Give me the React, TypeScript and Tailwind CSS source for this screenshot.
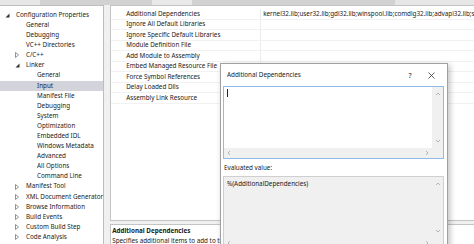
import React from 'react'

type Node = { label: string; level: 0 | 1 | 2; tri?: 'open' | 'closed'; selected?: boolean }

const tree: Node[] = [
  { label: 'Configuration Properties', level: 0, tri: 'open' },
  { label: 'General', level: 1 },
  { label: 'Debugging', level: 1 },
  { label: 'VC++ Directories', level: 1 },
  { label: 'C/C++', level: 1, tri: 'closed' },
  { label: 'Linker', level: 1, tri: 'open' },
  { label: 'General', level: 2 },
  { label: 'Input', level: 2, selected: true },
  { label: 'Manifest File', level: 2 },
  { label: 'Debugging', level: 2 },
  { label: 'System', level: 2 },
  { label: 'Optimization', level: 2 },
  { label: 'Embedded IDL', level: 2 },
  { label: 'Windows Metadata', level: 2 },
  { label: 'Advanced', level: 2 },
  { label: 'All Options', level: 2 },
  { label: 'Command Line', level: 2 },
  { label: 'Manifest Tool', level: 1, tri: 'closed' },
  { label: 'XML Document Generator', level: 1, tri: 'closed' },
  { label: 'Browse Information', level: 1, tri: 'closed' },
  { label: 'Build Events', level: 1, tri: 'closed' },
  { label: 'Custom Build Step', level: 1, tri: 'closed' },
  { label: 'Code Analysis', level: 1, tri: 'closed' },
]

const indent = ['pl-[4px]', 'pl-[14px]', 'pl-[25px]']

const props = [
  ['Additional Dependencies', 'kernel32.lib;user32.lib;gdi32.lib;winspool.lib;comdlg32.lib;advapi32.lib;shell32.lib'],
  ['Ignore All Default Libraries', ''],
  ['Ignore Specific Default Libraries', ''],
  ['Module Definition File', ''],
  ['Add Module to Assembly', ''],
  ['Embed Managed Resource File', ''],
  ['Force Symbol References', ''],
  ['Delay Loaded Dlls', ''],
  ['Assembly Link Resource', ''],
]

function Tri({ open }: { open: boolean }) {
  return open ? (
    <svg width="5" height="5" viewBox="0 0 5 5">
      <path d="M4.5 0.5 L4.5 4.5 L0.5 4.5 Z" fill="#333" />
    </svg>
  ) : (
    <svg width="4" height="6" viewBox="0 0 4 6">
      <path d="M0.5 0.5 L3.5 3 L0.5 5.5 Z" fill="none" stroke="#777" strokeWidth="0.8" />
    </svg>
  )
}

function Chevron({ dir }: { dir: 'up' | 'down' | 'left' | 'right' }) {
  const d = {
    up: 'M1 4 L3 2 L5 4',
    down: 'M1 2 L3 4 L5 2',
    left: 'M4 1 L2 3 L4 5',
    right: 'M2 1 L4 3 L2 5',
  }[dir]
  return (
    <svg width="6" height="6" viewBox="0 0 6 6">
      <path d={d} fill="none" stroke="#a6a6a6" strokeWidth="0.8" />
    </svg>
  )
}

function ScrollBox({ gray, children }: { gray?: boolean; children: React.ReactNode }) {
  return (
    <div
      className={`flex flex-col h-full border ${
        gray ? 'border-[#cfcfcf] bg-[#f0f0f0]' : 'border-[#8fbbe6] bg-white'
      }`}
    >
      <div className="flex flex-1 min-h-0">
        <div className="flex-1 px-[3px] pt-[1px]">{children}</div>
        <div className={`w-[11px] flex flex-col items-center justify-between py-[4px] ${gray ? '' : 'bg-[#f0f0f0]'}`}>
          <Chevron dir="up" />
          <Chevron dir="down" />
        </div>
      </div>
      <div className={`h-[10px] flex ${gray ? '' : 'bg-[#f0f0f0]'}`}>
        <div className="flex-1 flex items-center justify-between px-[2px]">
          <Chevron dir="left" />
          <Chevron dir="right" />
        </div>
        <div className="w-[11px]" />
      </div>
    </div>
  )
}

export default function App() {
  return (
    <div
      className="relative w-[474px] h-[244px] overflow-hidden bg-[#f0f0f0] text-[#222] text-[6.3px] leading-none"
      style={{ fontFamily: '"Noto Sans", "Segoe UI", sans-serif' }}
    >
      {/* combo box bottoms */}
      <div className="flex h-[5px]">
        <div className="w-[40px] bg-[#e6e6e6]" />
        <div className="w-[112px] bg-[#d2d2d2]" />
        <div className="w-[40px] bg-[#e9e9e9]" />
        <div className="w-[203px] bg-[#d2d2d2]" />
        <div className="flex-1 bg-[#e6e6e6]" />
      </div>

      <div className="flex h-[239px]">
        {/* tree */}
        <div className="w-[106px] h-full bg-white border-r border-t border-[#bdbdbd] pt-[4px]">
          {tree.map((n, i) => (
            <div
              key={i}
              className={`flex items-center h-[10.1px] ${indent[n.level]} ${n.selected ? 'bg-[#d3d3dc]' : ''}`}
            >
              <div className="w-[12px] flex items-center pl-[1px]">
                {n.tri && <Tri open={n.tri === 'open'} />}
              </div>
              <span className="whitespace-nowrap">{n.label}</span>
            </div>
          ))}
        </div>

        {/* property grid + description */}
        <div className="flex-1 flex flex-col pl-[6px]">
          <div className="flex-1 bg-white border border-[#c4c4c4] pt-[3px] overflow-hidden">
            {props.map(([name, value], i) => (
              <div key={i} className="flex h-[10.5px] border-b border-[#f2f2f2]">
                <div className="w-[150px] pl-[15px] flex items-center border-r border-[#ececec] whitespace-nowrap">
                  {name}
                </div>
                <div className="flex-1 pl-[2px] flex items-center whitespace-nowrap overflow-hidden">{value}</div>
              </div>
            ))}
          </div>
          <div className="h-[3px]" />
          <div className="h-[20px] bg-white border-t border-l border-[#c4c4c4] px-[1px] pt-[3px]">
            <div className="font-bold whitespace-nowrap">Additional Dependencies</div>
            <div className="mt-[4px] whitespace-nowrap">Specifies additional items to add to the link command line.</div>
          </div>
        </div>
      </div>

      {/* dialog */}
      <div className="absolute left-[220px] top-[63px] w-[228px] h-[195px] bg-white border border-[#a0a0a0] shadow-[2px_2px_6px_rgba(0,0,0,0.25)] flex flex-col">
        <div className="h-[22px] flex items-center pl-[6px]">
          <span className="flex-1 whitespace-nowrap">Additional Dependencies</span>
          <span className="w-[10px] text-center text-[7px]">?</span>
          <span className="w-[32px] flex justify-center">
            <svg width="7" height="7" viewBox="0 0 7 7">
              <path d="M0.5 0.5 L6.5 6.5 M6.5 0.5 L0.5 6.5" stroke="#333" strokeWidth="0.8" />
            </svg>
          </span>
        </div>
        <div className="h-[73px] pl-[2px] pr-[3px]">
          <ScrollBox>
            <div className="w-[1px] h-[8px] bg-[#222] mt-[1px]" />
          </ScrollBox>
        </div>
        <div className="h-[17px] flex items-center pl-[3px] pt-[2px] whitespace-nowrap">Evaluated value:</div>
        <div className="flex-1 pl-[2px] pr-[3px] pb-[8px]">
          <ScrollBox gray>
            <div className="pt-[3px] whitespace-nowrap">%(AdditionalDependencies)</div>
          </ScrollBox>
        </div>
      </div>
    </div>
  )
}
